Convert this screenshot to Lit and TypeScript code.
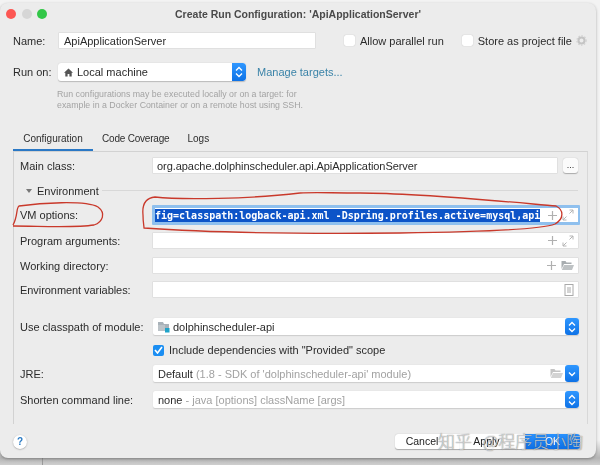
import { LitElement, html, css, svg } from "lit";
import { customElement } from "lit/decorators.js";

const plus = svg`<svg class="ic" width="11" height="11" viewBox="0 0 11 11"><path d="M5.5 1v9M1 5.5h9" stroke="#b0b0b0" stroke-width="1.2" fill="none"/></svg>`;
const expand = svg`<svg class="ic" width="12" height="12" viewBox="0 0 12 12"><path d="M7.5 1h3.5v3.5M11 1L7.5 4.5M4.5 11H1V7.5M1 11l3.5-3.5" stroke="#b4b4b4" stroke-width="1" fill="none"/></svg>`;
const folder = (c = "#a8adb0") => svg`<svg class="ic" width="13" height="11" viewBox="0 0 13 11"><path d="M0.5 1h4l1 1.5h5v1.5H3L0.5 9z" fill="${c}"/><path d="M3 5h10l-2 5H0.8z" fill="${c}" opacity=".75"/></svg>`;
const updown = svg`<svg width="8" height="12" viewBox="0 0 8 12"><path d="M1 4.5L4 1.5l3 3M1 7.5l3 3 3-3" stroke="#fff" stroke-width="1.3" fill="none"/></svg>`;
const down = svg`<svg width="8" height="6" viewBox="0 0 8 6"><path d="M1 1.5l3 3 3-3" stroke="#fff" stroke-width="1.4" fill="none"/></svg>`;

@customElement("app-root")
export class AppRoot extends LitElement {
  static styles = css`
    :host { display: block; width: 600px; height: 465px; position: relative; overflow: hidden;
      background: #f3f3f3; font-family: "Liberation Sans", Arial, sans-serif; font-size: 11px; color: #2b2b2b; }
    * { box-sizing: border-box; }
    .stage { width: 600px; height: 465px; padding: 3px 4px 0 0; filter: blur(0.35px); background: linear-gradient(#f3f3f3 0 440px, #b4b4b4 458px, #cfcfcf 465px); position: relative; }
    .back { position: absolute; left: 42px; top: 450px; width: 1px; height: 15px; background: #9a9a9a; }
    .win { position: relative; height: 455px; background: #ececec; border-radius: 8px; display: flex; flex-direction: column; box-shadow: 0 1px 3px rgba(0,0,0,.3); }
    .title { height: 20px; display: flex; align-items: center; position: relative; justify-content: center; font-weight: 700; font-size: 10.5px; color: #4a4a4a; padding-top: 1px; }
    .lights { position: absolute; left: 6px; top: 6px; display: flex; gap: 5.5px; }
    .lights i { width: 10px; height: 10px; border-radius: 50%; display: block; }
    .head { padding: 10px 0 0 13px; white-space: nowrap; }
    .row { display: flex; align-items: center; }
    .lab { width: 45px; flex: none; }
    .inp { background: #fff; box-shadow: 0 0 0 .5px #d4d4d4; display: flex; align-items: center; padding-left: 4px; }
    .name { width: 256px; height: 15px; margin-left: 1px; flex: none; padding-left: 5px; }
    .chk { width: 11px; height: 11px; border-radius: 2px; background: #fff; box-shadow: 0 0 1px #aaa; margin-right: 5px; flex: none; }
    .a { margin-left: 29px; display: flex; align-items: center; flex: none; }
    .a2 { margin-left: 18px; display: flex; align-items: center; flex: none; }
    .gear { margin-left: 4px; }
    .runrow { margin-top: 15px; }
    .sel { width: 188px; height: 18px; background: #fff; border-radius: 3px; box-shadow: 0 .5px 1px #bbb; display: flex; align-items: center; padding-left: 6px; gap: 4px; overflow: hidden; flex: none; }
    .sel span { flex: 1; }
    .blue { background: linear-gradient(#2f97ff, #0e72e6); display: flex; align-items: center; justify-content: center; flex: none; border-radius: 0 3px 3px 0; align-self: stretch; width: 14px; }
    .link { color: #3a83a8; margin-left: 11px; }
    .help { margin: 8px 0 0 44px; font-size: 8.8px; line-height: 11px; color: #a3a3a3; }
    .tabs { display: flex; margin-top: 21px; height: 19px; font-size: 10px; }
    .tab { padding: 0 9px 7px; height: 19px; display: flex; align-items: center; color: #2e2e2e; }
    .tab.on { width: 80px; justify-content: center; border-bottom: 2px solid #2a78c5; padding: 0 0 5px; }
    .tab.cc { letter-spacing: -.2px; }
    .panel { margin-left: 13px; width: 575px; height: 273px; border: 1px solid #d2d2d2; border-bottom: none; border-right-color: #d8d8d8; padding: 6px 9px 0 6px; }
    .f { display: flex; align-items: center; height: 15px; margin-bottom: 10px; }
    .f.wd { margin-bottom: 9px; }
    .f > label { width: 133px; flex: none; }
    .f .inp { flex: 1; height: 100%; justify-content: flex-start; }
    .tight { letter-spacing: -.06px; }
    .ics { margin-left: auto; display: flex; align-items: center; gap: 4px; padding-right: 4px; flex: none; }
    .ic { display: block; }
    .dots { width: 15px; height: 15px; margin-left: 6px; background: #fbfbfb; border-radius: 3px; box-shadow: 0 .5px 1px #aaa; font-size: 9px; text-align: center; line-height: 15px; }
    .env { display: flex; align-items: center; margin: 10px 0 7px 6px; height: 15px; gap: 5px; }
    .tri { width: 0; height: 0; border: 3px solid transparent; border-top: 4px solid #777; border-bottom: 0; }
    .env b { font-weight: 400; }
    .env hr { flex: 1; border: none; border-top: 1px solid #d8d8d8; margin: 0 0 0 -2px; }
    .vm { height: 20px; margin-bottom: 8px; }
    .vmbox { flex: 1; height: 20px; margin-left: -1px; margin-right: -2px; padding: 3px 2px 3px 3px; background: #8fc0ee; display: flex; border-radius: 1px; }
    .vmin { flex: 1; background: #fff; display: flex; align-items: center; overflow: hidden; }
    .mono { background: #0d54c8; color: #fff; font: 700 10px "DejaVu Sans Mono", monospace; height: 13px; line-height: 13px; white-space: pre; width: 385px; flex: none; }
    .f.cp { margin-top: 22px; margin-bottom: 10px; }
    .f.chkrow { margin-bottom: 9px; height: 12px; }
    .chkrow .on { width: 11px; height: 11px; background: #1b8ef2; border-radius: 2px; display: flex; align-items: center; justify-content: center; margin-right: 5px; }
    .gray { color: #a2a2a2; }
    .tall { height: 17px; margin-bottom: 9px; }
    .combo { flex: 1; height: 17px; margin-right: -1px; background: #fff; box-shadow: 0 .5px 1px #ccc; display: flex; align-items: center; padding-left: 5px; border-radius: 2px; }
    .combo .blue { width: 14px; border-radius: 3px; }
    .foot { display: flex; align-items: center; padding: 10px 0 0 13px; }
    .q { width: 14px; height: 14px; border-radius: 50%; background: #fff; box-shadow: 0 .5px 1.5px #999; color: #2b7bc4; font-weight: 700; font-size: 10px; text-align: center; line-height: 14px; }
    .btns { margin-left: auto; display: flex; margin-right: 16px; }
    .b { height: 15px; background: #fff; font-size: 10.5px; line-height: 15px; color: #222; text-align: center; box-shadow: 0 .5px 1px #aaa; }
    .b.c { width: 65px; border-radius: 3px 0 0 3px; padding-right: 11px; }
    .b.ap { width: 65px; padding-right: 12px; }
    .b.ok { width: 55px; background: linear-gradient(#2a92ff, #0d6fe6); color: #fff; border-radius: 0 3px 3px 0; }
    .mark { position: absolute; left: 438px; top: 431px; font: 300 17px/20px "Noto Sans CJK SC", sans-serif; word-spacing: 7px; color: rgba(255,255,255,.7); text-shadow: 0 0 1px rgba(50,50,50,.9); white-space: nowrap; }
    .ink { position: absolute; left: 0; top: 0; pointer-events: none; filter: blur(.3px); }
  `;

  render() {
    return html`<div class="stage"><div class="back"></div><div class="win">
      <div class="title">Create Run Configuration: 'ApiApplicationServer'
        <div class="lights"><i style="background:#fc5753"></i><i style="background:#d6d6d6"></i><i style="background:#33c748"></i></div>
      </div>
      <div class="head">
        <div class="row"><div class="lab">Name:</div><div class="inp name">ApiApplicationServer</div>
          <div class="a"><div class="chk"></div>Allow parallel run</div>
          <div class="a2"><div class="chk"></div>Store as project file
            <svg class="gear" width="11" height="11" viewBox="0 0 11 11"><circle cx="5.5" cy="5.5" r="3" fill="none" stroke="#c4c4c4" stroke-width="2"/><circle cx="5.5" cy="5.5" r="4.6" fill="none" stroke="#cfcfcf" stroke-width="1.2" stroke-dasharray="1.5 1.5"/></svg>
          </div></div>
        <div class="row runrow"><div class="lab">Run on:</div>
          <div class="sel"><svg width="9" height="9" viewBox="0 0 9 9"><path d="M4.5.5L9 4.7H7.7V8.5H5.4V6H3.6v2.5H1.3V4.7H0z" fill="#555"/></svg><span>Local machine</span><div class="blue">${updown}</div></div>
          <div class="link">Manage targets...</div></div>
        <div class="help">Run configurations may be executed locally or on a target: for<br>example in a Docker Container or on a remote host using SSH.</div>
        <div class="tabs"><div class="tab on">Configuration</div><div class="tab cc">Code Coverage</div><div class="tab">Logs</div></div>
      </div>
      <div class="panel">
        <div class="f"><label>Main class:</label><div class="inp tight">org.apache.dolphinscheduler.api.ApiApplicationServer</div><div class="dots">...</div></div>
        <div class="env"><div class="tri"></div><b>Environment</b><hr></div>
        <div class="f vm"><label>VM options:</label><div class="vmbox"><div class="vmin"><div class="mono">fig=classpath:logback-api.xml -Dspring.profiles.active=mysql,api</div><div class="ics">${plus}${expand}</div></div></div></div>
        <div class="f"><label>Program arguments:</label><div class="inp"><div class="ics">${plus}${expand}</div></div></div>
        <div class="f wd"><label>Working directory:</label><div class="inp"><div class="ics">${plus}${folder()}</div></div></div>
        <div class="f"><label class="tight">Environment variables:</label><div class="inp"><div class="ics"><svg class="ic" width="10" height="12" viewBox="0 0 10 12"><rect x="1" y=".5" width="8" height="11" fill="none" stroke="#aaa"/><path d="M3 4h4M3 6h4M3 8h4" stroke="#aaa"/></svg></div></div></div>
        <div class="f cp"><label>Use classpath of module:</label><div class="combo"><svg width="12" height="12" viewBox="0 0 12 12" style="margin-right:3px"><path d="M0 1h5l1 2h5v4H0z" fill="#a9b2b9"/><path d="M0 4h7v6H0z" fill="#bcc3c8"/><rect x="7" y="7" width="4.5" height="4.5" fill="#1fa3c9"/></svg><span>dolphinscheduler-api</span><div class="blue" style="margin-left:auto;height:17px">${updown}</div></div></div>
        <div class="f chkrow"><label></label><div class="on"><svg width="9" height="8" viewBox="0 0 9 8"><path d="M1 4l2.5 3L8 1" stroke="#fff" stroke-width="1.6" fill="none"/></svg></div>Include dependencies with "Provided" scope</div>
        <div class="f tall"><label>JRE:</label><div class="combo">Default&nbsp;<span class="gray">(1.8 - SDK of 'dolphinscheduler-api' module)</span><div class="ics" style="padding-right:2px">${folder("#c4c4c4")}</div><div class="blue">${down}</div></div></div>
        <div class="f tall"><label>Shorten command line:</label><div class="combo">none&nbsp;<span class="gray">- java [options] className [args]</span><div class="blue" style="margin-left:auto">${updown}</div></div></div>
      </div>
      <div class="foot"><div class="q">?</div><div class="btns"><div class="b c">Cancel</div><div class="b ap">Apply</div><div class="b ok">OK</div></div></div>
    </div></div>
    <svg class="ink" width="600" height="465" viewBox="0 0 600 465" fill="none" stroke="#c9392b" stroke-width="1.3">
      <path d="M13 225C18 216 16 208 19 206C40 203 85 200 98 207C106 213 103 222 94 225C75 228 40 226 13 226"/>
      <path d="M300 193C250 199 180 200 155 197C145 198 142 205 143 215C143 222 144 226 144 228C200 232 300 234 400 233C480 232 540 230 555 224C564 219 564 210 556 206C520 203 420 193 360 193C330 193 315 192 300 193"/>
    </svg>
    <div class="mark">知乎 @程序员小陶</div>`;
  }
}
